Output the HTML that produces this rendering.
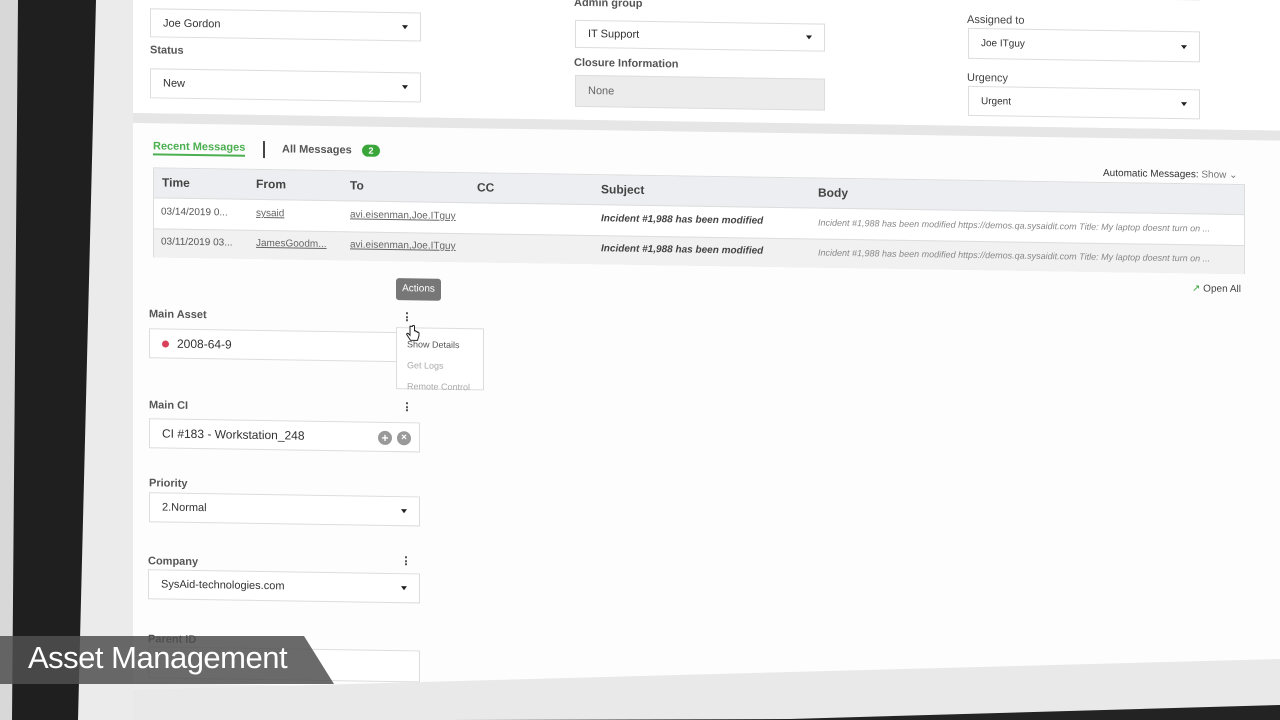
<!DOCTYPE html>
<html style="overflow:hidden;width:1280px;height:720px"><head><meta charset="utf-8"><style>
*{box-sizing:border-box;margin:0;padding:0}
body{width:1280px;height:720px;overflow:hidden;background:#ececec;font-family:"Liberation Sans",Arial,sans-serif;position:relative;color:#333}
.a{position:absolute}
#pg{position:absolute;left:0;top:0;width:1280px;height:690px;transform:skewY(0.88deg);transform-origin:0 0}
.lbl{position:absolute;font-size:11px;font-weight:bold;color:#555}
.sel{position:absolute;border:1px solid #ddd;background:#fff;font-size:11px;color:#333;padding-left:12px;display:flex;align-items:center}
.sel .c{position:absolute;right:12px;top:50%;margin-top:-2px;border-left:3.5px solid transparent;border-right:3.5px solid transparent;border-top:4px solid #222}
.keb{position:absolute;width:3px;font-size:0}
.keb i{display:block;width:2px;height:2px;background:#555;margin-bottom:1.5px}
.th{position:absolute;font-size:12px;font-weight:bold;color:#444}
.td{position:absolute;font-size:10px;color:#555}
.u{text-decoration:underline;color:#666}
</style></head><body>
<div id="pg">
 <div class="a" style="left:133px;top:-30px;width:1147px;height:141px;background:#fff"></div>
 <div class="a" style="left:133px;top:111px;width:1147px;height:10px;background:#e6e6e6"></div>
 <div class="a" style="left:133px;top:121px;width:1147px;height:560px;background:#fdfdfd"></div>

 <div class="sel" style="left:150px;top:6px;width:271px;height:29px">Joe Gordon<span class="c"></span></div>
 <div class="lbl" style="left:150px;top:42px">Status</div>
 <div class="sel" style="left:150px;top:66px;width:271px;height:30px">New<span class="c"></span></div>

 <div class="lbl" style="left:574px;top:-12px">Admin group</div>
 <div class="sel" style="left:575px;top:11px;width:250px;height:28px">IT Support<span class="c"></span></div>
 <div class="lbl" style="left:574px;top:48px">Closure Information</div>
 <div class="sel" style="left:575px;top:66px;width:250px;height:32px;background:#ececec;color:#666">None</div>

 <div class="sel" style="left:968px;top:-40px;width:232px;height:22px"></div>
 <div class="lbl" style="left:967px;top:-1px;font-weight:normal;color:#444">Assigned to</div>
 <div class="sel" style="left:968px;top:13px;width:232px;height:31px;font-size:10px">Joe ITguy<span class="c"></span></div>
 <div class="lbl" style="left:967px;top:57px;font-weight:normal;color:#444">Urgency</div>
 <div class="sel" style="left:968px;top:71px;width:232px;height:30px;font-size:10px">Urgent<span class="c"></span></div>

 <div class="a" style="left:153px;top:138px;font-size:11px;font-weight:bold;color:#4caf50;border-bottom:2px solid #4caf50;padding-bottom:1px">Recent Messages</div>
 <div class="a" style="left:263px;top:137px;width:2px;height:17px;background:#444"></div>
 <div class="a" style="left:282px;top:139px;font-size:11px;font-weight:bold;color:#555">All Messages</div>
 <div class="a" style="left:362px;top:139px;width:18px;height:12px;border-radius:6px;background:#3aa63a;color:#fff;font-size:9px;font-weight:bold;text-align:center;line-height:12px">2</div>
 <div class="a" style="left:1103px;top:151px;font-size:10px;color:#333">Automatic Messages: <span style="color:#777">Show ⌄</span></div>

 <div class="a" style="left:153px;top:165px;width:1092px;height:90px;border:1px solid #ddd;background:#fff"></div>
 <div class="a" style="left:154px;top:166px;width:1090px;height:30px;background:#eceef1;border-bottom:1px solid #ddd"></div>
 <div class="a" style="left:154px;top:226px;width:1090px;height:29px;background:#f1f1f1;border-top:1px solid #ddd"></div>
 <div class="th" style="left:162px;top:173px">Time</div>
 <div class="th" style="left:256px;top:173px">From</div>
 <div class="th" style="left:350px;top:173px">To</div>
 <div class="th" style="left:477px;top:173px">CC</div>
 <div class="th" style="left:601px;top:173px">Subject</div>
 <div class="th" style="left:818px;top:173px">Body</div>
 <div class="td" style="left:161px;top:204px">03/14/2019 0...</div>
 <div class="td u" style="left:256px;top:204px">sysaid</div>
 <div class="td u" style="left:350px;top:204px">avi.eisenman,Joe.ITguy</div>
 <div class="td" style="left:601px;top:204px;font-weight:bold;font-style:italic;color:#444">Incident #1,988 has been modified</div>
 <div class="td" style="left:818px;top:205px;font-style:italic;color:#888;font-size:9px">Incident #1,988 has been modified https://demos.qa.sysaidit.com Title: My laptop doesnt turn on ...</div>
 <div class="td" style="left:161px;top:234px">03/11/2019 03...</div>
 <div class="td u" style="left:256px;top:234px">JamesGoodm...</div>
 <div class="td u" style="left:350px;top:234px">avi.eisenman,Joe.ITguy</div>
 <div class="td" style="left:601px;top:234px;font-weight:bold;font-style:italic;color:#444">Incident #1,988 has been modified</div>
 <div class="td" style="left:818px;top:235px;font-style:italic;color:#888;font-size:9px">Incident #1,988 has been modified https://demos.qa.sysaidit.com Title: My laptop doesnt turn on ...</div>
 <div class="a" style="left:1192px;top:265px;font-size:10px;color:#444"><span style="color:#3aa63a">↗</span> Open All</div>

 <div class="a" style="left:396px;top:272px;width:45px;height:22px;background:#777;border-radius:3px;color:#fff;font-size:10px;text-align:center;line-height:22px">Actions</div>

 <div class="lbl" style="left:149px;top:306px">Main Asset</div>
 <div class="keb" style="left:406px;top:306px"><i></i><i></i><i></i></div>
 <div class="sel" style="left:149px;top:326px;width:271px;height:30px;font-size:12px"><span style="width:7px;height:7px;border-radius:50%;background:#d9415b;margin-right:8px;display:inline-block"></span>2008-64-9</div>
 <div class="a" style="left:396px;top:321px;width:88px;height:62px;border:1px solid #ddd;background:#fff;font-size:9px;padding:6px 0 0 10px;line-height:21px;color:#aaa">
  <div style="color:#555">Show Details</div><div>Get Logs</div><div>Remote Control</div></div>
 <svg class="a" style="left:405px;top:318px" width="16" height="20" viewBox="0 0 16 20"><path d="M5 2v9l-1.5-1.5c-1-1-2.5 0-1.5 1.2L5.5 16h7l1.5-5V8.5c0-1-1.5-1-1.5 0V7.8c0-1-1.5-1-1.5 0V7c0-1-1.5-1-1.5 0V2c0-1.3-2-1.3-2 0z" fill="#fff" stroke="#222" stroke-width="1"/></svg>

 <div class="lbl" style="left:149px;top:397px">Main CI</div>
 <div class="keb" style="left:406px;top:396px"><i></i><i></i><i></i></div>
 <div class="sel" style="left:149px;top:416px;width:271px;height:30px;font-size:12px">CI #183 - Workstation_248
  <span style="position:absolute;right:27px;top:8px;width:14px;height:14px;border-radius:50%;background:#999;color:#fff;font-size:12px;line-height:14px;text-align:center;font-weight:bold">+</span>
  <span style="position:absolute;right:8px;top:8px;width:14px;height:14px;border-radius:50%;background:#999;color:#fff;font-size:10px;line-height:14px;text-align:center;font-weight:bold">×</span></div>

 <div class="lbl" style="left:149px;top:475px">Priority</div>
 <div class="sel" style="left:149px;top:490px;width:271px;height:30px">2.Normal<span class="c"></span></div>

 <div class="lbl" style="left:148px;top:553px">Company</div>
 <div class="keb" style="left:405px;top:550px"><i></i><i></i><i></i></div>
 <div class="sel" style="left:148px;top:567px;width:272px;height:30px">SysAid-technologies.com<span class="c"></span></div>

 <div class="lbl" style="left:148px;top:631px">Parent ID</div>
 <div class="sel" style="left:148px;top:644px;width:272px;height:32px"></div>
</div>

<svg class="a" style="left:0;top:0" width="1280" height="720">
 <polygon points="133,690 640,676 1280,659 1280,720 0,720" fill="#e9e9e9"/>
 <polygon points="450,720 790,719 1280,705 1280,720" fill="#232323"/>
 <rect x="0" y="0" width="133" height="720" fill="#ebebeb"/>
 <rect x="0" y="0" width="18" height="720" fill="#d8d8d8"/>
 <polygon points="18,0 96,0 78,720 12,720" fill="#1f1f1f"/>
</svg>

<div class="a" style="left:0;top:636px;width:334px;height:48px;background:rgba(80,80,80,.85);clip-path:polygon(0 0,304px 0,334px 48px,0 48px)"></div>
<div class="a" style="left:28px;top:640px;font-size:31px;color:#fff;letter-spacing:-0.5px">Asset Management</div>
</body></html>
